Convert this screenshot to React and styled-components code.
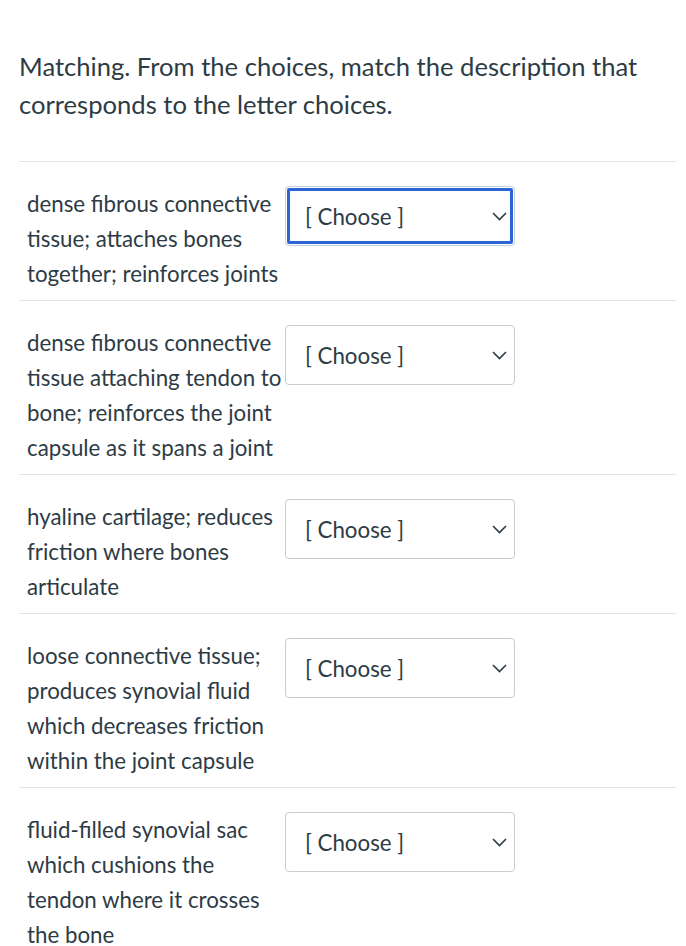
import styled, { createGlobalStyle } from 'styled-components';

const GlobalStyle = createGlobalStyle`
  body {
    margin: 0;
    background: #ffffff;
    font-family: Lato, "Open Sans", sans-serif;
    color: #2d3b45;
  }
`;

// conteneur de la question
const Question = styled.div`
  padding: 47px 10px 0 19px;
`;

const Prompt = styled.p`
  margin: 0 0 38px;
  font-size: 25.6px;
  line-height: 38px;
`;

const Answers = styled.div`
  border-top: 1px solid #e1e4e6;
`;

const Row = styled.div`
  display: flex;
  align-items: flex-start;
  padding: 24px 0 9px 8px;
  border-bottom: 1px solid #e1e4e6;
`;

const Label = styled.div`
  width: 258px;
  flex-shrink: 0;
  font-size: 22.3px;
  line-height: 35px;
`;

const SelectWrap = styled.div`
  position: relative;
  width: 230px;
  height: 60px;
`;

// liste déroulante
const Select = styled.select`
  appearance: none;
  box-sizing: border-box;
  width: 100%;
  height: 100%;
  padding: 0 40px 0 19px;
  border: 1px solid #c7cdd1;
  border-radius: 4px;
  background: #ffffff;
  font-family: Lato, "Open Sans", sans-serif;
  font-size: 22.3px;
  color: #2d3b45;
  outline: ${(p) => (p.$focused ? '3px solid #2a65d3' : 'none')};
  outline-offset: -5px;
`;

const Chevron = styled.svg`
  position: absolute;
  right: 8px;
  top: 50%;
  margin-top: -4px;
  width: 15px;
  height: 9px;
  pointer-events: none;
`;

const items = [
  'dense fibrous connective tissue; attaches bones together; reinforces joints',
  'dense fibrous connective tissue attaching tendon to bone; reinforces the joint capsule as it spans a joint',
  'hyaline cartilage; reduces friction where bones articulate',
  'loose connective tissue; produces synovial fluid which decreases friction within the joint capsule',
  'fluid-filled synovial sac which cushions the tendon where it crosses the bone',
];

const App = () => (
  <>
    <GlobalStyle />
    <Question>
      <Prompt>
        Matching. From the choices, match the description that corresponds to the letter choices.
      </Prompt>
      <Answers>
        {items.map((text, index) => (
          <Row key={index}>
            <Label>{text}</Label>
            <SelectWrap>
              <Select $focused={index === 0} defaultValue="">
                <option value="">[ Choose ]</option>
              </Select>
              <Chevron viewBox="0 0 15 9">
                <path d="M1 1 L7.5 7.5 L14 1" fill="none" stroke="#2d3b45" strokeWidth="1.6" />
              </Chevron>
            </SelectWrap>
          </Row>
        ))}
      </Answers>
    </Question>
  </>
);

export default App;
